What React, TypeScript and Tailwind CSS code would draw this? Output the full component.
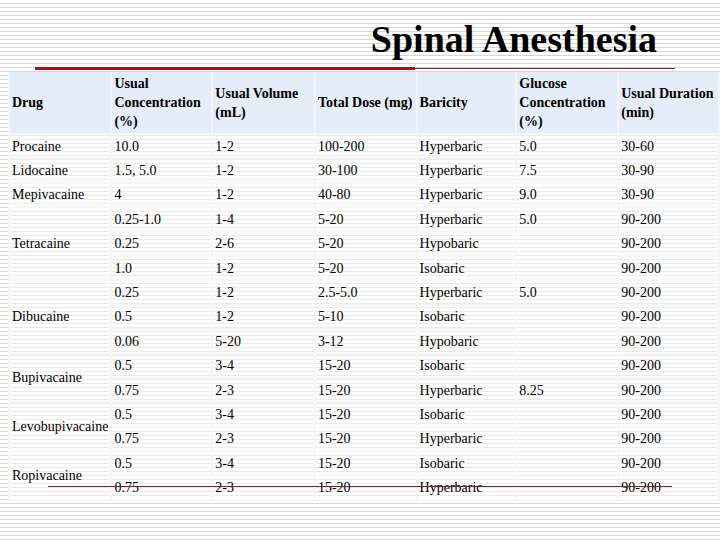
import React from "react";

const cols = [101, 101, 103, 102, 100, 102, 101];

type Cell = { text?: string; rowSpan?: number };
type Row = Cell[];

const rows: Row[] = [
  [{ text: "Procaine" }, { text: "10.0" }, { text: "1-2" }, { text: "100-200" }, { text: "Hyperbaric" }, { text: "5.0" }, { text: "30-60" }],
  [{ text: "Lidocaine" }, { text: "1.5, 5.0" }, { text: "1-2" }, { text: "30-100" }, { text: "Hyperbaric" }, { text: "7.5" }, { text: "30-90" }],
  [{ text: "Mepivacaine" }, { text: "4" }, { text: "1-2" }, { text: "40-80" }, { text: "Hyperbaric" }, { text: "9.0" }, { text: "30-90" }],
  [{ text: "Tetracaine", rowSpan: 3 }, { text: "0.25-1.0" }, { text: "1-4" }, { text: "5-20" }, { text: "Hyperbaric" }, { text: "5.0" }, { text: "90-200" }],
  [{ text: "0.25" }, { text: "2-6" }, { text: "5-20" }, { text: "Hypobaric" }, { text: "", rowSpan: 2 }, { text: "90-200" }],
  [{ text: "1.0" }, { text: "1-2" }, { text: "5-20" }, { text: "Isobaric" }, { text: "90-200" }],
  [{ text: "Dibucaine", rowSpan: 3 }, { text: "0.25" }, { text: "1-2" }, { text: "2.5-5.0" }, { text: "Hyperbaric" }, { text: "5.0" }, { text: "90-200" }],
  [{ text: "0.5" }, { text: "1-2" }, { text: "5-10" }, { text: "Isobaric" }, { text: "", rowSpan: 3 }, { text: "90-200" }],
  [{ text: "0.06" }, { text: "5-20" }, { text: "3-12" }, { text: "Hypobaric" }, { text: "90-200" }],
  [{ text: "Bupivacaine", rowSpan: 2 }, { text: "0.5" }, { text: "3-4" }, { text: "15-20" }, { text: "Isobaric" }, { text: "90-200" }],
  [{ text: "0.75" }, { text: "2-3" }, { text: "15-20" }, { text: "Hyperbaric" }, { text: "8.25" }, { text: "90-200" }],
  [{ text: "Levobupivacaine", rowSpan: 2 }, { text: "0.5" }, { text: "3-4" }, { text: "15-20" }, { text: "Isobaric" }, { text: "", rowSpan: 4 }, { text: "90-200" }],
  [{ text: "0.75" }, { text: "2-3" }, { text: "15-20" }, { text: "Hyperbaric" }, { text: "90-200" }],
  [{ text: "Ropivacaine", rowSpan: 2 }, { text: "0.5" }, { text: "3-4" }, { text: "15-20" }, { text: "Isobaric" }, { text: "90-200" }],
  [{ text: "0.75" }, { text: "2-3" }, { text: "15-20" }, { text: "Hyperbaric" }, { text: "90-200" }],
];

const headers = [
  ["Drug"],
  ["Usual", "Concentration", "(%)"],
  ["Usual Volume", "(mL)"],
  ["Total Dose (mg)"],
  ["Baricity"],
  ["Glucose", "Concentration", "(%)"],
  ["Usual Duration", "(min)"],
];

export default function App() {
  return (
    <div
      className="relative w-[720px] h-[540px] overflow-hidden bg-[repeating-linear-gradient(to_bottom,#ffffff_0px,#ffffff_3px,#d6d6d6_3px,#d6d6d6_4px)] text-black"
      style={{ fontFamily: '"Liberation Serif", "Times New Roman", serif' }}
    >
      {/* Title */}
      <div className="h-[68px] flex items-start justify-end pr-[63px] pt-[17px]">
        <h1 className="text-[38px] leading-[44px] font-bold">Spinal Anesthesia</h1>
      </div>

      {/* Red rule */}
      <div className="flex items-center h-[3px] -mt-[1px]">
        <div className="ml-[35px] w-[380px] h-[3px] bg-[#a51414]" />
        <div className="w-[260px] h-px bg-[#8b2222]" />
      </div>

      {/* Table */}
      <table className="mt-[2px] ml-[8px] table-fixed border-collapse text-[14px] leading-[17px]">
        <colgroup>
          {cols.map((w, i) => (
            <col key={i} style={{ width: w }} />
          ))}
        </colgroup>
        <thead>
          <tr className="h-[62px]">
            {headers.map((h, i) => (
              <th
                key={i}
                className="bg-[#e4edf9] border-x-2 border-[#f2f5fa] px-[2px] text-left align-middle font-bold leading-[19px]"
              >
                {h.map((l, j) => (
                  <div key={j}>{l}</div>
                ))}
              </th>
            ))}
          </tr>
        </thead>
        <tbody>
          {rows.map((r, i) => (
            <tr key={i} className="h-[24.4px]">
              {r.map((c, j) => (
                <td
                  key={j}
                  rowSpan={c.rowSpan}
                  className="bg-white/50 border-2 border-[#f6f6f6] px-[2px] align-middle whitespace-nowrap"
                >
                  {c.text}
                </td>
              ))}
            </tr>
          ))}
        </tbody>
      </table>

      {/* Bottom rule over the last row */}
      <div className="absolute top-[486px] left-[48px] w-[624px] h-px bg-[#7a2030]" />
    </div>
  );
}
